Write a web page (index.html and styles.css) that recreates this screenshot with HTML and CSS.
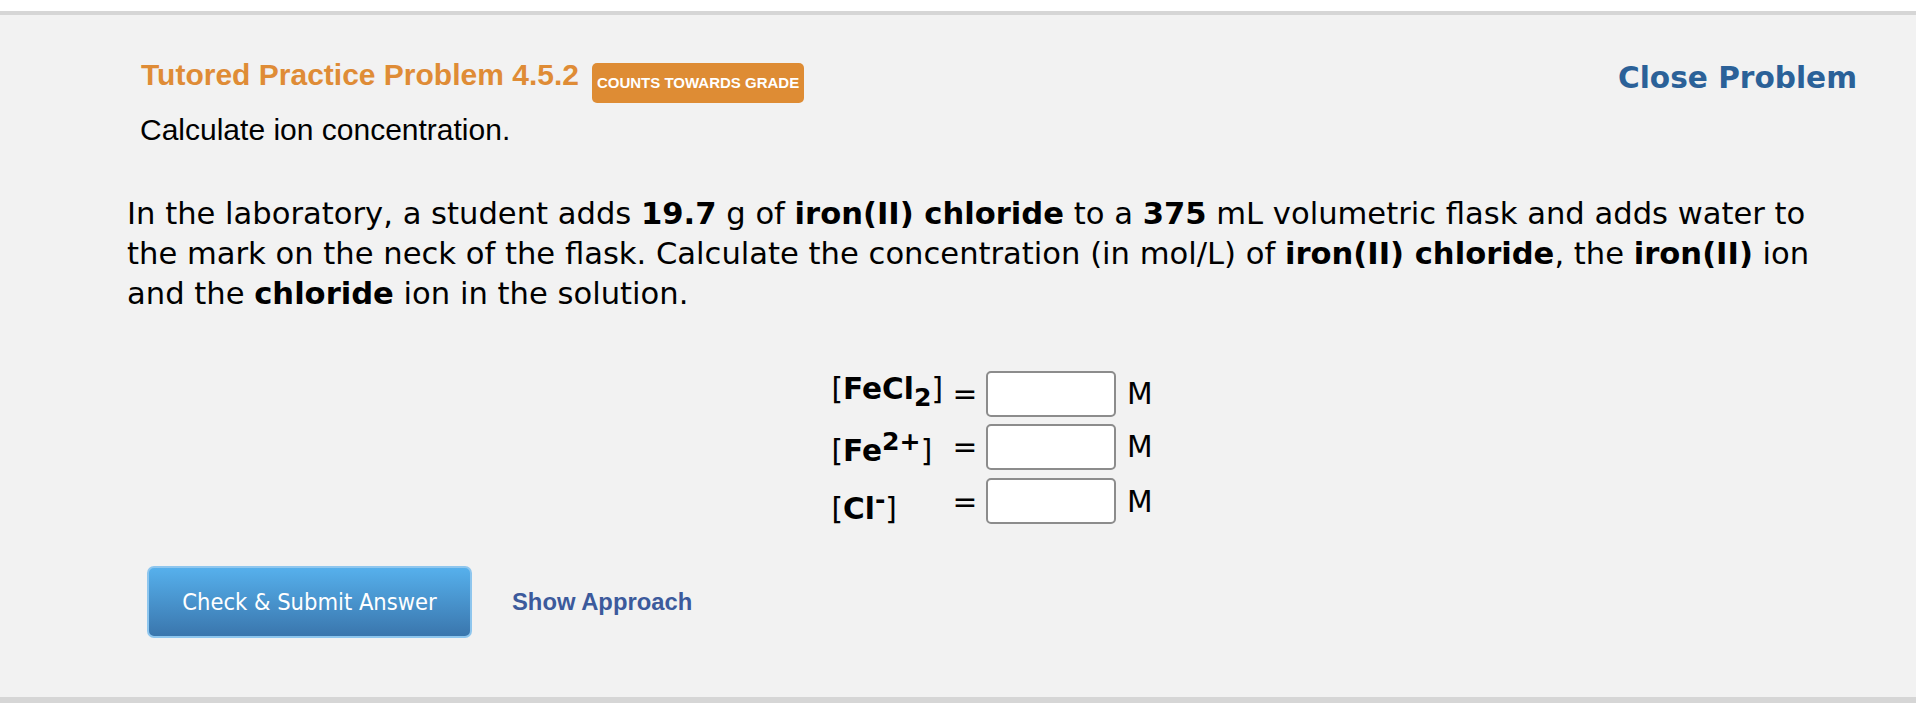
FILE: index.html
```html
<!DOCTYPE html>
<html lang="en">
<head>
<meta charset="utf-8">
<title>Tutored Practice Problem 4.5.2</title>
<link rel="stylesheet" href="styles.css">
</head>
<body>
<div class="frame">
  <div class="content">
    <div class="header">
      <div class="title-group">
        <h1 class="title">Tutored Practice Problem 4.5.2</h1>
        <span class="badge">COUNTS TOWARDS GRADE</span>
      </div>
      <a class="close-link" href="#">Close Problem</a>
    </div>
    <p class="subtitle">Calculate ion concentration.</p>
    <p class="question">In the laboratory, a student adds <b>19.7</b> g of <b>iron(II) chloride</b> to a <b>375</b> mL volumetric flask and adds water to<br>the mark on the neck of the flask. Calculate the concentration (in mol/L) of <b>iron(II) chloride</b>, the <b>iron(II)</b> ion<br>and the <b>chloride</b> ion in the solution.</p>
    <table class="answers">
      <tr>
        <td class="label">[<b>FeCl<sub>2</sub></b>]</td>
        <td class="eq">=</td>
        <td class="field"><input class="box" type="text"></td>
        <td class="unit">M</td>
      </tr>
      <tr>
        <td class="label">[<b>Fe<sup>2+</sup></b>]</td>
        <td class="eq">=</td>
        <td class="field"><input class="box" type="text"></td>
        <td class="unit">M</td>
      </tr>
      <tr>
        <td class="label label-low">[<b>Cl<sup>-</sup></b>]</td>
        <td class="eq">=</td>
        <td class="field"><input class="box" type="text"></td>
        <td class="unit">M</td>
      </tr>
    </table>
    <div class="actions">
      <button class="submit" type="button">Check &amp; Submit Answer</button>
      <a class="approach" href="#">Show Approach</a>
    </div>
  </div>
</div>
</body>
</html>
```

FILE: styles.css
```css
html, body {
  margin: 0;
  padding: 0;
  background: #ffffff;
}

body {
  font-family: "DejaVu Sans", Verdana, sans-serif;
  color: #000;
}

.frame {
  margin-top: 11px;
  border-top: 4px solid #d6d6d6;
  border-bottom: 6px solid #d6d6d6;
  background: #f2f2f2;
  height: 682px;
  box-sizing: content-box;
}

.content {
  padding: 43px 59px 0 127px;
}

.header {
  display: flex;
  justify-content: space-between;
  align-items: flex-start;
  padding-left: 14px;
}

.title-group {
  display: flex;
  align-items: flex-start;
  gap: 13px;
}

.title {
  margin: 0;
  font: bold 30px/34px "Liberation Sans", Arial, sans-serif;
  color: #df8c36;
}

.badge {
  margin-top: 5px;
  height: 40px;
  padding: 0 5px;
  background: #de8c34;
  color: #fff;
  font: bold 15px/40px "Liberation Sans", Arial, sans-serif;
  border-radius: 5px;
  white-space: nowrap;
}

.close-link {
  margin-top: 3px;
  font: bold 29.6px/34px "DejaVu Sans", Verdana, sans-serif;
  color: #2b6198;
  text-decoration: none;
}

.subtitle {
  margin: 10px 0 0;
  padding-left: 13px;
  font: 30px/34px "Liberation Sans", Arial, sans-serif;
  color: #000;
}

.question {
  margin: 47px 0 0;
  font: 30.6px/40px "DejaVu Sans", Verdana, sans-serif;
  color: #000;
}

.answers {
  margin: 53px auto 0;
  border-collapse: collapse;
}

.answers td {
  padding: 3.5px 0;
  vertical-align: middle;
}

.label {
  font-size: 29.6px;
  line-height: 34px;
  white-space: nowrap;
  padding-right: 9.5px !important;
}

.label-low {
  padding-top: 10px !important;
}

.label sub,
.label sup {
  font-size: 0.85em;
}

.eq {
  font-size: 29.7px;
  padding-right: 8.5px !important;
}

.box {
  display: block;
  box-sizing: border-box;
  width: 130px;
  height: 46px;
  margin: 0;
  border: 2px solid #8c8c8c;
  border-radius: 5px;
  background: #fff;
}

.unit {
  font-size: 29.7px;
  padding-left: 11px !important;
}

.actions {
  display: flex;
  align-items: center;
  margin-top: 37px;
  padding-left: 20px;
}

.submit {
  width: 325px;
  height: 72px;
  border: 2px solid #8ec6ee;
  border-radius: 7px;
  background: linear-gradient(#56b0ec, #3a76ad);
  color: #fff;
  font: 23.5px "DejaVu Sans Condensed", "Liberation Sans", Arial, sans-serif;
  padding: 0;
}

.approach {
  margin-left: 40px;
  font: bold 23.8px "Liberation Sans", Arial, sans-serif;
  color: #3c5a9c;
  text-decoration: none;
}
```
